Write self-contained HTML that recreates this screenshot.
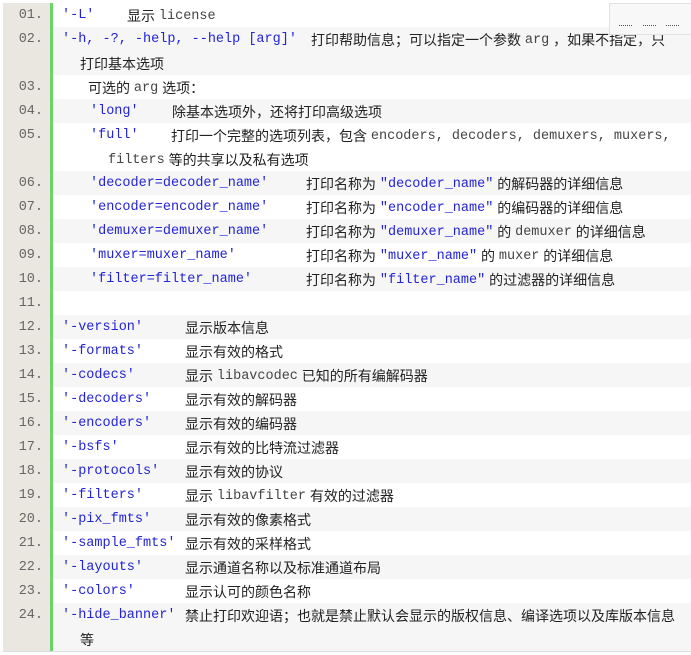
<!DOCTYPE html>
<html><head><meta charset="utf-8"><style>
*{margin:0;padding:0;box-sizing:border-box}
body{width:691px;height:655px;background:#fff;position:relative;overflow:hidden;font-family:"Liberation Sans","Noto Sans CJK SC",sans-serif;font-size:14px;color:#222}
.gut{position:absolute;left:3px;top:3px;width:47px;height:649px;background:#e9e7df}
.bar{position:absolute;left:50px;top:3px;width:3px;height:649px;background:#6ad46a}
.bot{position:absolute;left:3px;top:651px;width:688px;height:1px;background:#ddd}
.l{position:absolute;left:53px;width:638px;height:24px;line-height:24px;white-space:nowrap}
.l>span{top:1px}
.g{background:#f6f6f6}
.n{position:absolute;left:-44px;width:34px;text-align:right;font-family:"Liberation Mono",monospace;font-size:13.5px;color:#666}
.s{position:absolute}
.m{font-family:"Liberation Mono",monospace;font-size:13.5px;color:#444}
.s .m{vertical-align:2px}
.b{color:#2323d8}
.tb{position:absolute;left:609px;top:3px;width:82px;height:32px;background:#f8f8f8;border:1px solid #e2e2e2;border-right:none}
.tb i{position:absolute;top:21px;width:13px;border-top:1px dotted #555}
</style></head><body>
<div class="gut"></div><div class="bar"></div>

<div class="l" style="top:3px"><span class="n">01.</span><span class="s m b" style="left:9px">'-L'</span><span class="s" style="left:74px">显示 <span class="m">license</span></span></div>
<div class="l g" style="top:27px;height:48px"><span class="n">02.</span><span class="s m b" style="left:9px">'-h, -?, -help, --help [arg]'</span><span class="s" style="left:258px">打印帮助信息；可以指定一个参数 <span class="m">arg</span> ，如果不指定，只</span><span class="s" style="left:27px;top:25px">打印基本选项</span></div>
<div class="l" style="top:75px"><span class="n">03.</span><span class="s" style="left:35px">可选的 <span class="m">arg</span> 选项：</span></div>
<div class="l g" style="top:99px"><span class="n">04.</span><span class="s m b" style="left:37px">'long'</span><span class="s" style="left:119px">除基本选项外，还将打印高级选项</span></div>
<div class="l" style="top:123px;height:48px"><span class="n">05.</span><span class="s m b" style="left:37px">'full'</span><span class="s" style="left:118px">打印一个完整的选项列表，包含 <span class="m">encoders, decoders, demuxers, muxers,</span></span><span class="s" style="left:55px;top:25px"><span class="m">filters</span> 等的共享以及私有选项</span></div>
<div class="l g" style="top:171px"><span class="n">06.</span><span class="s m b" style="left:37px">'decoder=decoder_name'</span><span class="s" style="left:253px">打印名称为 <span class="m b">"decoder_name"</span> 的解码器的详细信息</span></div>
<div class="l" style="top:195px"><span class="n">07.</span><span class="s m b" style="left:37px">'encoder=encoder_name'</span><span class="s" style="left:253px">打印名称为 <span class="m b">"encoder_name"</span> 的编码器的详细信息</span></div>
<div class="l g" style="top:219px"><span class="n">08.</span><span class="s m b" style="left:37px">'demuxer=demuxer_name'</span><span class="s" style="left:253px">打印名称为 <span class="m b">"demuxer_name"</span> 的 <span class="m">demuxer</span> 的详细信息</span></div>
<div class="l" style="top:243px"><span class="n">09.</span><span class="s m b" style="left:37px">'muxer=muxer_name'</span><span class="s" style="left:253px">打印名称为 <span class="m b">"muxer_name"</span> 的 <span class="m">muxer</span> 的详细信息</span></div>
<div class="l g" style="top:267px"><span class="n">10.</span><span class="s m b" style="left:37px">'filter=filter_name'</span><span class="s" style="left:253px">打印名称为 <span class="m b">"filter_name"</span> 的过滤器的详细信息</span></div>
<div class="l" style="top:291px"><span class="n">11.</span></div>
<div class="l g" style="top:315px"><span class="n">12.</span><span class="s m b" style="left:9px">'-version'</span><span class="s" style="left:132px">显示版本信息</span></div>
<div class="l" style="top:339px"><span class="n">13.</span><span class="s m b" style="left:9px">'-formats'</span><span class="s" style="left:132px">显示有效的格式</span></div>
<div class="l g" style="top:363px"><span class="n">14.</span><span class="s m b" style="left:9px">'-codecs'</span><span class="s" style="left:132px">显示 <span class="m">libavcodec</span> 已知的所有编解码器</span></div>
<div class="l" style="top:387px"><span class="n">15.</span><span class="s m b" style="left:9px">'-decoders'</span><span class="s" style="left:132px">显示有效的解码器</span></div>
<div class="l g" style="top:411px"><span class="n">16.</span><span class="s m b" style="left:9px">'-encoders'</span><span class="s" style="left:132px">显示有效的编码器</span></div>
<div class="l" style="top:435px"><span class="n">17.</span><span class="s m b" style="left:9px">'-bsfs'</span><span class="s" style="left:132px">显示有效的比特流过滤器</span></div>
<div class="l g" style="top:459px"><span class="n">18.</span><span class="s m b" style="left:9px">'-protocols'</span><span class="s" style="left:132px">显示有效的协议</span></div>
<div class="l" style="top:483px"><span class="n">19.</span><span class="s m b" style="left:9px">'-filters'</span><span class="s" style="left:132px">显示 <span class="m">libavfilter</span> 有效的过滤器</span></div>
<div class="l g" style="top:507px"><span class="n">20.</span><span class="s m b" style="left:9px">'-pix_fmts'</span><span class="s" style="left:132px">显示有效的像素格式</span></div>
<div class="l" style="top:531px"><span class="n">21.</span><span class="s m b" style="left:9px">'-sample_fmts'</span><span class="s" style="left:132px">显示有效的采样格式</span></div>
<div class="l g" style="top:555px"><span class="n">22.</span><span class="s m b" style="left:9px">'-layouts'</span><span class="s" style="left:132px">显示通道名称以及标准通道布局</span></div>
<div class="l" style="top:579px"><span class="n">23.</span><span class="s m b" style="left:9px">'-colors'</span><span class="s" style="left:132px">显示认可的颜色名称</span></div>
<div class="l g" style="top:603px;height:48px"><span class="n">24.</span><span class="s m b" style="left:9px">'-hide_banner'</span><span class="s" style="left:132px">禁止打印欢迎语；也就是禁止默认会显示的版权信息、编译选项以及库版本信息</span><span class="s" style="left:27px;top:25px">等</span></div>

<div class="bot"></div>
<div class="tb"><i style="left:9px"></i><i style="left:33px"></i><i style="left:56px"></i></div>
</body></html>
